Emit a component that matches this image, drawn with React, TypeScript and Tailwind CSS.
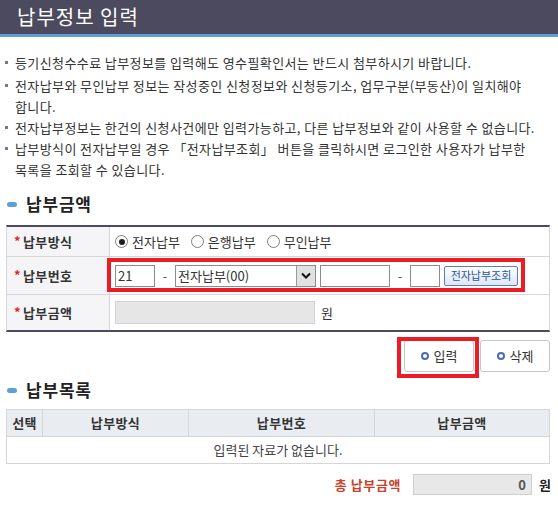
import type { ReactNode } from "react";

const notices: ReactNode[] = [
  <>등기신청수수료 납부정보를 입력해도 영수필확인서는 반드시 첨부하시기 바랍니다.</>,
  <>
    전자납부와 무인납부 정보는 작성중인 신청정보와 신청등기소, 업무구분(부동산)이 일치해야
    <br />
    합니다.
  </>,
  <>전자납부정보는 한건의 신청사건에만 입력가능하고, 다른 납부정보와 같이 사용할 수 없습니다.</>,
  <>
    납부방식이 전자납부일 경우 「전자납부조회」 버튼을 클릭하시면 로그인한 사용자가 납부한
    <br />
    목록을 조회할 수 있습니다.
  </>,
];

function SectionTitle({ children }: { children: ReactNode }) {
  return (
    <div className="flex items-center h-[20px] pl-[7px]">
      <span className="w-[10px] h-[5px] rounded-full bg-[#5d9fd6]" />
      <h2 className="ml-[9px] text-[17px] leading-[20px] tracking-[0.8px] font-bold text-[#222]">{children}</h2>
    </div>
  );
}

function Radio({ checked, label }: { checked?: boolean; label: string }) {
  return (
    <label className="flex items-center gap-[4px]">
      <span className="w-[13px] h-[13px] rounded-full border border-[#808080] bg-white flex items-center justify-center">
        {checked && <span className="w-[6px] h-[6px] rounded-full bg-[#1e1e1e]" />}
      </span>
      <span className="text-[13px] text-[#333]">{label}</span>
    </label>
  );
}

function Label({ children }: { children: ReactNode }) {
  return (
    <div className="w-[103px] shrink-0 flex items-center pl-[7px] bg-[#f5f5f7] border-r border-[#d6d6d9]">
      <span className="text-[#e3242b] text-[13px] font-bold leading-none -mt-[3px] w-[9px]">*</span>
      <span className="text-[13px] font-bold tracking-[0.4px] text-[#333]">{children}</span>
    </div>
  );
}

function ActionButton({ children }: { children: ReactNode }) {
  return (
    <button
      type="button"
      className="w-[70px] h-[32px] flex items-center justify-center gap-[5px] bg-white border border-[#c6c6c6] rounded-[3px] text-[13px] text-[#333]"
    >
      <span className="w-[8px] h-[8px] rounded-full border-2 border-[#4a6cb3]" />
      {children}
    </button>
  );
}

export default function App() {
  return (
    <div className="w-[558px] min-h-[525px] bg-white font-['Noto_Sans_CJK_KR','Noto_Sans',sans-serif] text-[#333]">
      {/* Header */}
      <div className="h-[34px] bg-[#4c4a5e] flex items-center pl-[17px]">
        <h1 className="text-[20px] tracking-[1px] text-white leading-none">납부정보 입력</h1>
      </div>
      <div className="h-[3px] bg-[#5ba0d3]" />

      {/* Notices */}
      <ul className="mt-[15px] pl-[5px] text-[13px] leading-[21px] tracking-[0.4px] text-[#333]">
        {notices.map((n, i) => (
          <li key={i} className={`flex whitespace-nowrap ${i === 1 ? "mt-[2px]" : ""}`}>
            <span className="w-[10px] shrink-0 pt-[9px]">
              <span className="block w-[3px] h-[3px] bg-[#7a7a7a]" />
            </span>
            <span>{n}</span>
          </li>
        ))}
      </ul>

      {/* 납부금액 */}
      <div className="mt-[14px]">
        <SectionTitle>납부금액</SectionTitle>
      </div>

      <div className="mt-[11px] ml-[6px] w-[544px] border-t-2 border-b-2 border-t-[#4c4a5e] border-b-[#4c4a5e] border-x border-x-[#d6d6d9]">
        <div className="flex h-[30px] border-b border-[#d6d6d9]">
          <Label>납부방식</Label>
          <div className="flex items-center pl-[5px] gap-[11px]">
            <Radio checked label="전자납부" />
            <Radio label="은행납부" />
            <Radio label="무인납부" />
          </div>
        </div>

        <div className="relative flex h-[38px] border-b border-[#d6d6d9]">
          <Label>납부번호</Label>
          <div className="flex items-center pl-[5px] text-[13px]">
            <div className="w-[40px] h-[22px] border border-[#8c8c8c] flex items-center pl-[2px]">21</div>
            <span className="w-[20px] text-center text-[#555]">-</span>
            <div className="w-[141px] h-[22px] border border-[#8c8c8c] flex items-center">
              <span className="flex-1 pl-[2px] leading-none">전자납부(00)</span>
              <span className="w-[19px] h-full bg-[#e1e1e1] border-l border-[#9a9a9a] flex items-center justify-center">
                <svg width="10" height="7" viewBox="0 0 10 7">
                  <path d="M1 1.5 L5 5.5 L9 1.5" fill="none" stroke="#111" strokeWidth="2" />
                </svg>
              </span>
            </div>
            <div className="ml-[4px] w-[70px] h-[22px] border border-[#8c8c8c]" />
            <span className="w-[20px] text-center text-[#555]">-</span>
            <div className="w-[30px] h-[22px] border border-[#8c8c8c]" />
            <button
              type="button"
              className="ml-[4px] w-[74px] h-[20px] border border-[#5a7fc0] rounded-[2px] bg-gradient-to-b from-white to-[#dde7f5] text-[11px] text-[#2b55a5] leading-none"
            >
              전자납부조회
            </button>
          </div>
          <div className="absolute left-[100px] top-[1px] w-[418px] h-[34px] border-4 border-[#ec1c24] pointer-events-none" />
        </div>

        <div className="flex h-[35px]">
          <Label>납부금액</Label>
          <div className="flex items-center pl-[5px] text-[13px]">
            <div className="w-[200px] h-[23px] bg-[#e6e6e6] border border-[#d3d3d3]" />
            <span className="ml-[6px]">원</span>
          </div>
        </div>
      </div>

      {/* Buttons */}
      <div className="mt-[8px] flex justify-end gap-[6px] pr-[8px]">
        <div className="relative">
          <ActionButton>입력</ActionButton>
          <div className="absolute -left-[7px] -top-[3px] w-[82px] h-[41px] border-4 border-[#ec1c24] pointer-events-none" />
        </div>
        <ActionButton>삭제</ActionButton>
      </div>

      {/* 납부목록 */}
      <div className="mt-[8px]">
        <SectionTitle>납부목록</SectionTitle>
      </div>

      <div className="mt-[9px] ml-[6px] w-[544px] border border-[#d6d6d9] text-[13px]">
        <div className="grid grid-cols-[36px_146px_186px_1fr] h-[27px] bg-[#e9edf1] border-b border-[#d6d6d9] font-bold tracking-[0.4px] text-[#333]">
          <div className="flex items-center justify-center border-r border-[#d6d6d9]">선택</div>
          <div className="flex items-center justify-center border-r border-[#d6d6d9]">납부방식</div>
          <div className="flex items-center justify-center border-r border-[#d6d6d9]">납부번호</div>
          <div className="flex items-center justify-center">납부금액</div>
        </div>
        <div className="h-[26px] flex items-center justify-center text-[#444]">입력된 자료가 없습니다.</div>
      </div>

      {/* Total */}
      <div className="mt-[10px] flex items-center justify-end pr-[7px]">
        <span className="text-[13px] font-bold tracking-[0.6px] text-[#c8432b]">총 납부금액</span>
        <div className="ml-[12px] w-[119px] h-[21px] bg-[#e8e8e8] border border-[#cfcfcf] flex items-center justify-end pr-[5px] text-[13px] font-bold text-[#555]">
          0
        </div>
        <span className="ml-[7px] text-[13px] font-bold text-[#222]">원</span>
      </div>
    </div>
  );
}
